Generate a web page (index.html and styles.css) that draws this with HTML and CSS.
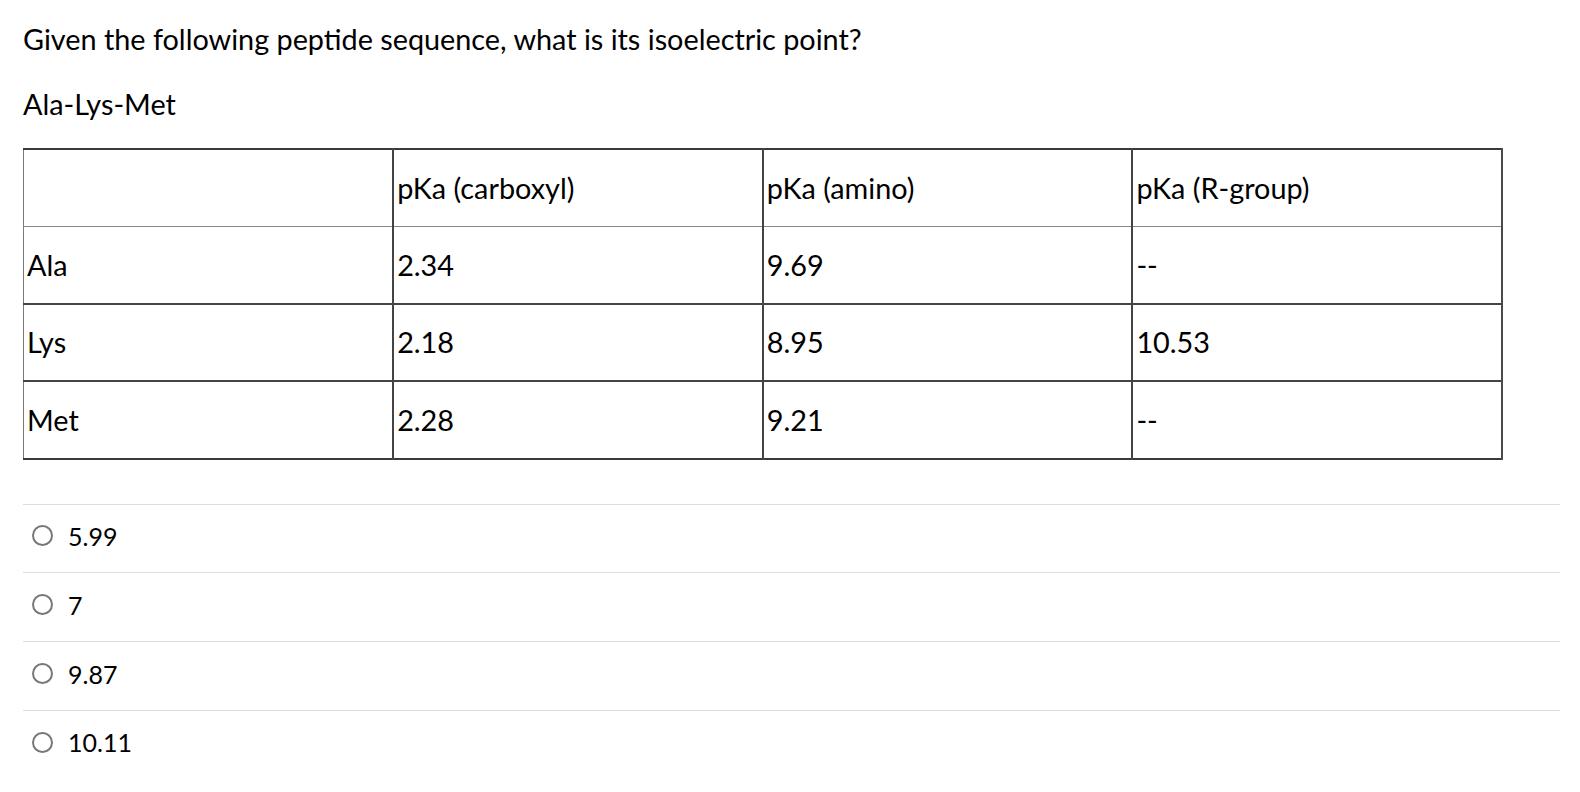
FILE: index.html
```html
<!DOCTYPE html>
<html>
<head>
<meta charset="utf-8">
<link rel="stylesheet" href="styles.css">
</head>
<body>
<div class="question">
  <p class="prompt">Given the following peptide sequence, what is its isoelectric point?</p>
  <p class="seq">Ala-Lys-Met</p>
  <table class="pka">
    <thead>
      <tr><td></td><td>pKa (carboxyl)</td><td>pKa (amino)</td><td>pKa (R-group)</td></tr>
    </thead>
    <tbody>
      <tr><td>Ala</td><td>2.34</td><td>9.69</td><td>--</td></tr>
      <tr><td>Lys</td><td>2.18</td><td>8.95</td><td>10.53</td></tr>
      <tr><td>Met</td><td>2.28</td><td>9.21</td><td>--</td></tr>
    </tbody>
  </table>
  <ul class="answers">
    <li class="answer"><span class="radio"></span><span class="label">5.99</span></li>
    <li class="answer"><span class="radio"></span><span class="label">7</span></li>
    <li class="answer"><span class="radio"></span><span class="label">9.87</span></li>
    <li class="answer"><span class="radio"></span><span class="label">10.11</span></li>
  </ul>
</div>
</body>
</html>
```
FILE: styles.css
```css
html, body {
  margin: 0;
  padding: 0;
  background: #fff;
}
body {
  font-family: Lato, "Liberation Sans", sans-serif;
  color: #000;
}
.question {
  padding: 0 0 0 23px;
  width: 1560px;
  box-sizing: border-box;
}
.prompt {
  margin: 0;
  padding-top: 21px;
  font-size: 28.8px;
  line-height: 36px;
}
.seq {
  margin: 0;
  padding-top: 29px;
  font-size: 28.8px;
  line-height: 36px;
}
.pka {
  margin-top: 26px;
  width: 1480px;
  table-layout: fixed;
  border-collapse: collapse;
  border-top: 2px solid #3a3a3a;
  border-bottom: 2px solid #3a3a3a;
  border-right: 2px solid #4a4a4a;
  border-left: 1px solid #7a7a7a;
  font-size: 28.8px;
}
.pka td {
  height: 77.4px;
  padding: 0 3px;
  vertical-align: middle;
  border-right: 2px solid #444;
  box-sizing: border-box;
}
.pka td:last-child {
  border-right: 2px solid #4a4a4a;
}
.pka thead td {
  border-bottom: 1px solid #888;
}
.pka tbody tr + tr td {
  border-top: 2px solid #444;
}
.answers {
  list-style: none;
  margin: 44px 0 0 0;
  padding: 0;
}
.answer {
  display: flex;
  align-items: center;
  height: 68.8px;
  padding-bottom: 5px;
  box-sizing: border-box;
  border-top: 1px solid #ddd;
  font-size: 25px;
}
.radio {
  width: 17px;
  height: 17px;
  border: 2px solid #777;
  border-radius: 50%;
  margin-left: 9px;
  margin-right: 15px;
  flex: none;
}
```
